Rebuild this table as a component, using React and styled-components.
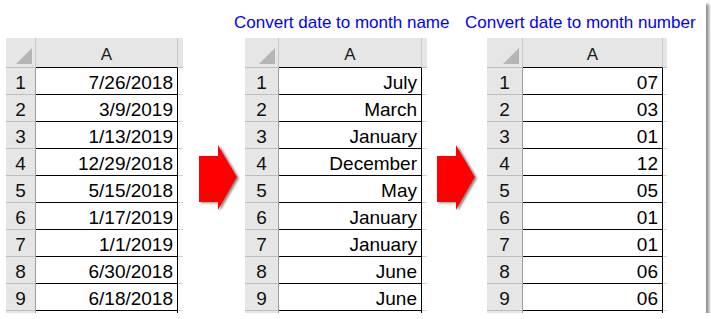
import React from "react";
import styled, { createGlobalStyle } from "styled-components";

const GlobalStyle = createGlobalStyle`
    html, body {
        margin: 0;
        padding: 0;
        background: #ffffff;
    }
    body {
        font-family: "Liberation Sans", Arial, sans-serif;
    }
`;

const Frame = styled.div`
    width: 706px;
    height: 313px;
    background: #ffffff;
    box-shadow: 3px 4px 3px rgba(0, 0, 0, 0.45);
    display: flex;
    align-items: flex-start;
    padding-left: 6px;
    box-sizing: border-box;
    overflow: hidden;
`;

const Column = styled.div`
    display: flex;
    flex-direction: column;
`;

/* zero-width so the caption can hang past the sheet without widening it */
const Title = styled.div`
    width: 0;
    height: 38px;
    line-height: 45px;
    margin-left: ${props => props.shift || 0}px;
    font-size: 17px;
    color: #0000ff;
    white-space: nowrap;
`;

const Sheet = styled.div`
    display: grid;
    grid-template-columns: ${props => props.hdr}px ${props => props.col}px ${props => props.tail}px;
    grid-template-rows: 30px repeat(9, 27px) 2px;
    font-family: "Liberation Sans", Arial, sans-serif;
`;

const Corner = styled.div`
    position: relative;
    background: #e6e6e6;
    border-right: 1px solid #c8c8c8;
    border-bottom: 1px solid #bdbdbd;
    box-sizing: border-box;

    &::after {
        content: "";
        position: absolute;
        right: 3px;
        bottom: 3px;
        border-style: solid;
        border-width: 0 0 16px 16px;
        border-color: transparent transparent #b5b5b5 transparent;
    }
`;

const ColHeader = styled.div`
    background: #e6e6e6;
    border-right: 1px solid #c8c8c8;
    border-bottom: 1px solid #000;
    box-sizing: border-box;
    display: flex;
    align-items: center;
    justify-content: center;
    padding-top: 4px;
    font-size: 17px;
    color: #1a1a1a;
`;

const HeaderTail = styled.div`
    background: #e6e6e6;
    border-bottom: 1px solid #bdbdbd;
    box-sizing: border-box;
`;

const RowHeader = styled.div`
    background: #e6e6e6;
    border-right: 1px solid #9e9e9e;
    border-bottom: 1px solid #bdbdbd;
    box-sizing: border-box;
    display: flex;
    align-items: center;
    justify-content: center;
    padding-top: 3px;
    font-size: 19px;
    color: #111;
`;

const Cell = styled.div`
    background: #fff;
    border-right: 1px solid #000;
    border-bottom: ${props => (props.blank ? "none" : "1px solid #000")};
    box-sizing: border-box;
    display: flex;
    align-items: center;
    justify-content: flex-end;
    padding: 3px 4px 0 0;
    font-size: 19px;
    color: #000;
`;

const Tail = styled.div`
    border-bottom: ${props => (props.blank ? "none" : "1px solid #d4d4d4")};
    box-sizing: border-box;
`;

const ArrowBox = styled.div`
    margin: 145px ${props => props.right}px 0 ${props => props.left}px;
    width: 41px;
    height: 68px;
`;

const Arrow = ({ left, right, id }) => (
    <ArrowBox left={left} right={right}>
        <svg width="41" height="68" viewBox="0 0 41 68">
            <defs>
                <filter id={id} x="-20%" y="-20%" width="150%" height="150%">
                    <feDropShadow dx="2" dy="1" stdDeviation="1" floodColor="#555" floodOpacity="0.7" />
                </filter>
            </defs>
            <polygon
                points="0,11 19,11 19,0 38,32 19,65 19,57 0,57"
                fill="#ff0000"
                filter={`url(#${id})`}
            />
        </svg>
    </ArrowBox>
);

const SheetTable = ({ hdr, col, tail, values }) => (
    <Sheet hdr={hdr} col={col} tail={tail}>
        <Corner />
        <ColHeader>A</ColHeader>
        <HeaderTail />
        {values.map((v, i) => (
            <React.Fragment key={i}>
                <RowHeader>{i + 1}</RowHeader>
                <Cell>{v}</Cell>
                <Tail />
            </React.Fragment>
        ))}
        <RowHeader />
        <Cell blank />
        <Tail blank />
    </Sheet>
);

const dates = [
    "7/26/2018", "3/9/2019", "1/13/2019", "12/29/2018", "5/15/2018",
    "1/17/2019", "1/1/2019", "6/30/2018", "6/18/2018",
];
const months = [
    "July", "March", "January", "December", "May",
    "January", "January", "June", "June",
];
const numbers = ["07", "03", "01", "12", "05", "01", "01", "06", "06"];

const App = () => (
    <>
        <GlobalStyle />
        <Frame>
            <Column>
                <Title />
                <SheetTable hdr={30} col={142} tail={5} values={dates} />
            </Column>
            <Arrow left={16} right={5} id="arrowShadowA" />
            <Column>
                <Title shift={-11}>Convert date to month name</Title>
                <SheetTable hdr={34} col={143} tail={5} values={months} />
            </Column>
            <Arrow left={10} right={9} id="arrowShadowB" />
            <Column>
                <Title shift={-22}>Convert date to month number</Title>
                <SheetTable hdr={36} col={140} tail={4} values={numbers} />
            </Column>
        </Frame>
    </>
);

export default App;
